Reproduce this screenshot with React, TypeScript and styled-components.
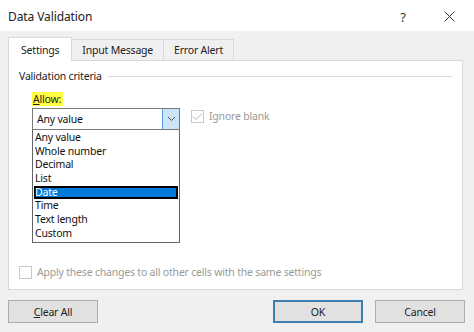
import React from "react";
import styled, { createGlobalStyle } from "styled-components";

const GlobalStyle = createGlobalStyle`
  html, body {
    margin: 0;
    padding: 0;
    background: #f0f0f0;
  }
  * {
    box-sizing: border-box;
  }
`;

const Dialog = styled.div`
  width: 474px;
  height: 332px;
  display: flex;
  flex-direction: column;
  background: #f0f0f0;
  font-family: "Noto Sans", "Open Sans", sans-serif;
  font-size: 10.5px;
  letter-spacing: -0.2px;
  color: #111;
  overflow: hidden;
`;

const TitleBar = styled.div`
  height: 31px;
  display: flex;
  align-items: center;
  background: #fff;
  padding: 2px 2px 0 8px;
`;

const Title = styled.div`
  flex: 1;
  font-size: 12px;
  letter-spacing: -0.1px;
  color: #222;
`;

const TitleButton = styled.div`
  width: 46px;
  height: 29px;
  display: flex;
  align-items: center;
  justify-content: center;
  color: #333;
  font-size: 13px;
`;

const Body = styled.div`
  flex: 1;
  display: flex;
  flex-direction: column;
  padding: 6px 11px 0 8px;
`;

const TabRow = styled.div`
  display: flex;
  align-items: flex-end;
  height: 24px;
`;

const Tab = styled.div<{ $active?: boolean }>`
  height: ${(p) => (p.$active ? "24px" : "22px")};
  padding: 0 ${(p) => (p.$active ? "12px" : "10px")};
  display: flex;
  align-items: center;
  background: ${(p) => (p.$active ? "#fff" : "#f0f0f0")};
  border: 1px solid #d9d9d9;
  border-bottom: ${(p) => (p.$active ? "none" : "1px solid #d9d9d9")};
  margin-left: ${(p) => (p.$active ? "0" : "-1px")};
  position: relative;
  z-index: ${(p) => (p.$active ? 1 : 0)};
  color: #222;
`;

const Panel = styled.div`
  height: 230px;
  margin-top: -1px;
  background: #fff;
  border: 1px solid #d9d9d9;
  display: flex;
  flex-direction: column;
  padding: 7px 10px 10px 10px;
`;

const GroupHeader = styled.div`
  display: flex;
  align-items: center;
  gap: 6px;
  height: 16px;
  color: #222;
`;

const GroupLine = styled.div`
  flex: 1;
  height: 1px;
  background: #dcdcdc;
`;

const CriteriaRow = styled.div`
  display: flex;
  padding-left: 13px;
  margin-top: 8px;
`;

const Field = styled.div`
  position: relative;
  display: flex;
  flex-direction: column;
  align-items: flex-start;
`;

const Label = styled.span`
  background: #ffff44;
  padding: 0 2px 0 1px;
  line-height: 14px;
  color: #222;
  margin-bottom: 2px;
`;

const Combo = styled.div`
  width: 148px;
  height: 22px;
  border: 1px solid #7a7a7a;
  display: flex;
  align-items: center;
  background: #fff;
`;

const ComboText = styled.div`
  flex: 1;
  padding-left: 4px;
`;

const ComboButton = styled.div`
  width: 17px;
  height: 20px;
  background: #cce4f7;
  border-left: 1px solid #569de5;
  display: flex;
  align-items: center;
  justify-content: center;
`;

const DropList = styled.div`
  position: absolute;
  top: 38px;
  left: 0;
  width: 148px;
  border: 1px solid #646464;
  border-top: none;
  background: #fff;
  padding: 1px 0 1px 0;
  z-index: 2;
`;

const DropItem = styled.div<{ $selected?: boolean }>`
  height: 13.7px;
  line-height: 13.7px;
  padding-left: ${(p) => (p.$selected ? "1px" : "2px")};
  margin: 0 ${(p) => (p.$selected ? "1px" : "0")};
  background: ${(p) => (p.$selected ? "#0078d7" : "transparent")};
  color: ${(p) => (p.$selected ? "#fff" : "#111")};
  box-shadow: ${(p) => (p.$selected ? "inset 0 0 0 2px #000" : "none")};
  white-space: nowrap;
`;

const CheckRow = styled.label<{ $dim?: boolean }>`
  display: flex;
  align-items: center;
  gap: 5px;
  color: ${(p) => (p.$dim ? "#9a9a9a" : "#222")};
`;

const Box = styled.span`
  width: 13px;
  height: 13px;
  border: 1px solid #c8c8c8;
  background: #fff;
  display: flex;
  align-items: center;
  justify-content: center;
`;

const IgnoreWrap = styled.div`
  margin-left: 11px;
  margin-top: 17px;
`;

const ApplyWrap = styled.div`
  margin-top: auto;
`;

const ButtonRow = styled.div`
  display: flex;
  align-items: center;
  margin-top: 10px;
  margin-right: -2px;
`;

const Button = styled.div<{ $default?: boolean }>`
  width: 90px;
  height: 23px;
  display: flex;
  align-items: center;
  justify-content: center;
  background: #e1e1e1;
  border: ${(p) => (p.$default ? "2px solid #3c7fb1" : "1px solid #adadad")};
  color: #222;
`;

const Spacer = styled.div`
  flex: 1;
`;

const Gap = styled.div`
  width: 12px;
`;

const U = styled.span`
  text-decoration: underline;
`;

const Chevron = () => (
  <svg width="9" height="6" viewBox="0 0 9 6">
    <path d="M1 1 L4.5 4.5 L8 1" fill="none" stroke="#555" strokeWidth="1" />
  </svg>
);

const Tick = () => (
  <svg width="11" height="9" viewBox="0 0 11 9">
    <path d="M1 4.5 L4 7.5 L10 1.5" fill="none" stroke="#b5b5b5" strokeWidth="1" />
  </svg>
);

const items = [
  "Any value",
  "Whole number",
  "Decimal",
  "List",
  "Date",
  "Time",
  "Text length",
  "Custom",
];

const App = () => {
  return (
    <Dialog>
      <GlobalStyle />
      <TitleBar>
        <Title>Data Validation</Title>
        <TitleButton>?</TitleButton>
        <TitleButton>
          <svg width="11" height="11" viewBox="0 0 11 11">
            <path d="M0.5 0.5 L10.5 10.5 M10.5 0.5 L0.5 10.5" stroke="#333" strokeWidth="1" />
          </svg>
        </TitleButton>
      </TitleBar>
      <Body>
        <TabRow>
          <Tab $active>Settings</Tab>
          <Tab>Input Message</Tab>
          <Tab>Error Alert</Tab>
        </TabRow>
        <Panel>
          <GroupHeader>
            Validation criteria
            <GroupLine />
          </GroupHeader>
          <CriteriaRow>
            <Field>
              <Label>
                <U>A</U>llow:
              </Label>
              <Combo>
                <ComboText>Any value</ComboText>
                <ComboButton>
                  <Chevron />
                </ComboButton>
              </Combo>
              <DropList>
                {items.map((item) => (
                  <DropItem key={item} $selected={item === "Date"}>
                    {item}
                  </DropItem>
                ))}
              </DropList>
            </Field>
            <IgnoreWrap>
              <CheckRow $dim>
                <Box>
                  <Tick />
                </Box>
                Ignore blank
              </CheckRow>
            </IgnoreWrap>
          </CriteriaRow>
          <ApplyWrap>
            <CheckRow $dim>
              <Box />
              Apply these changes to all other cells with the same settings
            </CheckRow>
          </ApplyWrap>
        </Panel>
        <ButtonRow>
          <Button>
            <span>
              <U>C</U>lear All
            </span>
          </Button>
          <Spacer />
          <Button $default>OK</Button>
          <Gap />
          <Button>Cancel</Button>
        </ButtonRow>
      </Body>
    </Dialog>
  );
};

export default App;
